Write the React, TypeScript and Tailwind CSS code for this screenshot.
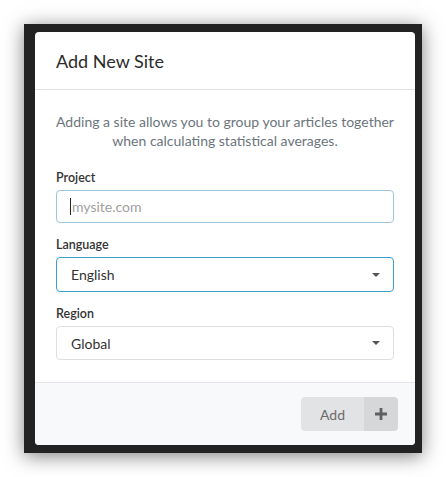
function Caret() {
  return (
    <svg width="8" height="4" viewBox="0 0 8 4" className="shrink-0">
      <path d="M0 0 H8 L4 4 Z" fill="#555" />
    </svg>
  )
}

function PlusMark() {
  return (
    <svg width="12" height="12" viewBox="0 0 12 12">
      <path d="M4.6 0 H7.4 V4.6 H12 V7.4 H7.4 V12 H4.6 V7.4 H0 V4.6 H4.6 Z" fill="#5f5f5f" />
    </svg>
  )
}

function Field({ label, children }: { label: string; children: React.ReactNode }) {
  return (
    <div className="flex flex-col">
      <label className="text-[12.5px] font-semibold text-[#333] leading-[16px] mb-[4px]">{label}</label>
      {children}
    </div>
  )
}

export default function App() {
  return (
    <div className="w-[446px] h-[477px] bg-white pt-[24px] pl-[24px]" style={{ fontFamily: 'Lato, "Open Sans", sans-serif' }}>
      {/* dark overlay frame around the dialog */}
      <div className="w-[398px] h-[429px] bg-[#222222] pl-[11px] pt-[8px] shadow-[0_3px_18px_rgba(0,0,0,0.5)]">
        <div className="w-[380px] h-[413px] bg-white rounded-[4px] overflow-hidden flex flex-col">
          <div className="h-[58px] shrink-0 px-[21px] flex items-center border-b border-[#dee2e6]">
            <h2 className="text-[18px] text-[#2b2b2b] leading-none">Add New Site</h2>
          </div>

          <div className="flex-1 px-[21px] pt-[22px] flex flex-col">
            <p className="text-[14px] leading-[19px] text-[#6c757d] text-center mb-[20px]">
              Adding a site allows you to group your articles together when calculating statistical averages.
            </p>

            <div className="flex flex-col gap-[14px]">
              <Field label="Project">
                <div className="h-[33px] rounded-[4px] border border-[#9cc6da] flex items-center px-[13px]">
                  <span className="w-px h-[17px] bg-[#222] mr-px" />
                  <span className="text-[14px] text-[#a0a0a0]">mysite.com</span>
                </div>
              </Field>
              <Field label="Language">
                <div className="h-[35px] rounded-[4px] border border-[#3a9fca] flex items-center justify-between pl-[14px] pr-[13px]">
                  <span className="text-[14px] text-[#333]">English</span>
                  <Caret />
                </div>
              </Field>
              <Field label="Region">
                <div className="h-[34px] rounded-[4px] border border-[#dcdfe3] flex items-center justify-between pl-[14px] pr-[13px]">
                  <span className="text-[14px] text-[#333]">Global</span>
                  <Caret />
                </div>
              </Field>
            </div>
          </div>

          <div className="h-[63px] shrink-0 bg-[#f8f9fa] border-t border-[#e3e5e8] flex items-center justify-end pr-[17px]">
            <div className="flex h-[34px] rounded-[4px] overflow-hidden">
              <span className="w-[63px] bg-[#e2e3e5] text-[14px] text-[#6b6b6b] flex items-center justify-center">Add</span>
              <span className="w-[34px] bg-[#d6d7d9] flex items-center justify-center">
                <PlusMark />
              </span>
            </div>
          </div>
        </div>
      </div>
    </div>
  )
}
